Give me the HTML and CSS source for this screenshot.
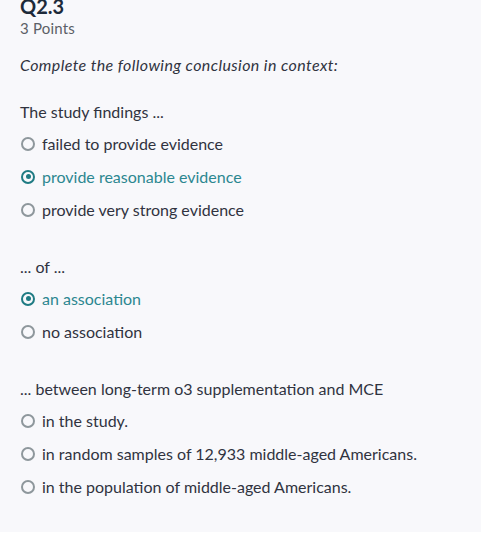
FILE: index.html
```html
<!DOCTYPE html>
<html>
<head>
<meta charset="utf-8">
<link rel="stylesheet" href="styles.css">
</head>
<body>
<div class="question">
  <h2 class="q-title">Q2.3</h2>
  <div class="q-points">3 Points</div>
  <p class="q-prompt">Complete the following conclusion in context:</p>

  <div class="group">
    <div class="group-label">The study findings ...</div>
    <label class="option"><span class="radio"></span><span class="opt-text">failed to provide evidence</span></label>
    <label class="option is-checked"><span class="radio"></span><span class="opt-text">provide reasonable evidence</span></label>
    <label class="option"><span class="radio"></span><span class="opt-text">provide very strong evidence</span></label>
  </div>

  <div class="group">
    <div class="group-label">... of ...</div>
    <label class="option is-checked"><span class="radio"></span><span class="opt-text">an association</span></label>
    <label class="option"><span class="radio"></span><span class="opt-text">no association</span></label>
  </div>

  <div class="group">
    <div class="group-label">... between long-term o3 supplementation and MCE</div>
    <label class="option"><span class="radio"></span><span class="opt-text">in the study.</span></label>
    <label class="option"><span class="radio"></span><span class="opt-text">in random samples of 12,933 middle-aged Americans.</span></label>
    <label class="option"><span class="radio"></span><span class="opt-text">in the population of middle-aged Americans.</span></label>
  </div>
</div>
<div class="footer-strip"></div>
</body>
</html>
```

FILE: styles.css
```css
html, body {
  margin: 0;
  padding: 0;
  background: #ffffff;
}
body {
  font-family: Lato, "Open Sans", sans-serif;
  color: #30333f;
  overflow: hidden;
}
.question {
  display: flow-root;
  background: #f8f8fb;
  padding: 0 20px 0 21px;
  height: 532px;
  box-sizing: border-box;
}
.q-title {
  margin: -6px 0 0 -1px;
  font-size: 20px;
  line-height: 24px;
  font-weight: 700;
  color: #1d2a3a;
}
.q-points {
  margin: 0 0 0 -1px;
  font-size: 15px;
  line-height: 20px;
  letter-spacing: 0.2px;
  color: #5c5f66;
}
.q-prompt {
  margin: 10px 0 0 -1px;
  font-size: 16px;
  line-height: 33px;
  font-style: italic;
  letter-spacing: 0.4px;
  color: #30333f;
}
.group {
  margin-top: 15px;
}
.group + .group {
  margin-top: 25px;
}
.group-label {
  font-size: 16px;
  line-height: 31px;
  margin-left: -1px;
}
.option {
  display: flex;
  align-items: center;
  height: 33px;
  font-size: 16px;
  gap: 7px;
}
.radio {
  width: 14px;
  height: 14px;
  box-sizing: border-box;
  border: 2px solid #8e979c;
  border-radius: 50%;
  flex: none;
  position: relative;
}
.is-checked .radio {
  border-color: #1f7b83;
}
.is-checked .radio::after {
  content: "";
  position: absolute;
  left: 50%;
  top: 50%;
  width: 5px;
  height: 5px;
  margin: -2.5px 0 0 -2.5px;
  border-radius: 50%;
  background: #1f7b83;
}
.is-checked .opt-text {
  color: #2c8790;
}
.footer-strip {
  height: 9px;
  background: #ffffff;
}
```
